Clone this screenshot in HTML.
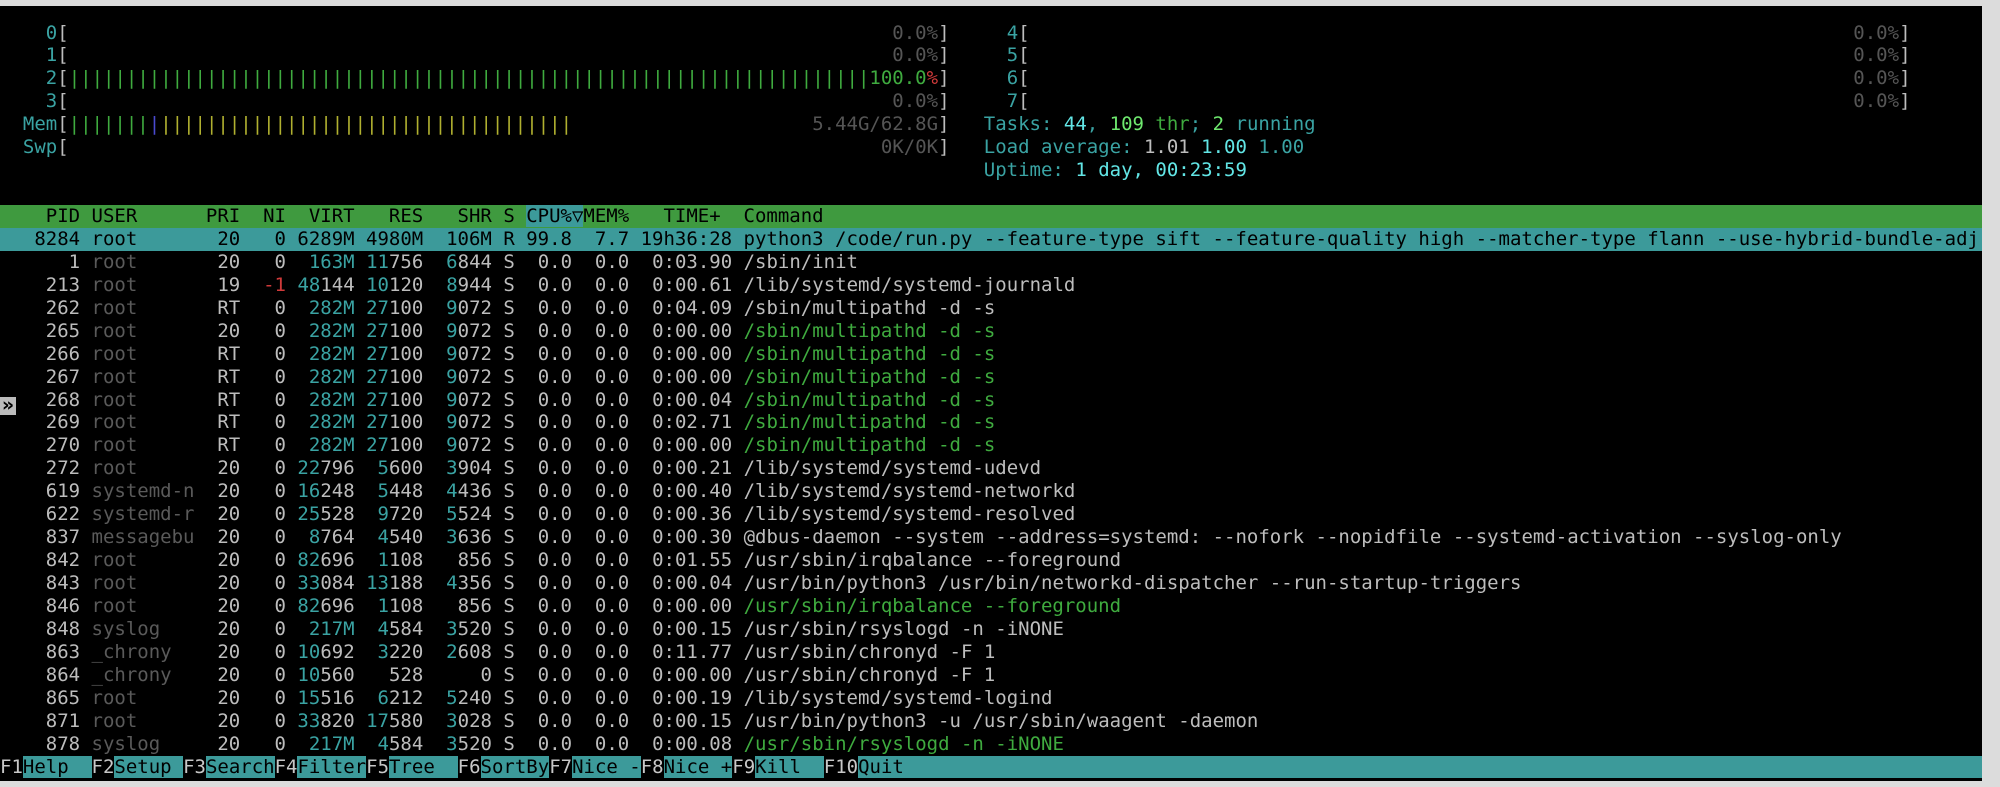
<!DOCTYPE html>
<html><head><meta charset="utf-8"><style>
html,body{margin:0;padding:0;background:#dcdcdc;width:2000px;height:787px;overflow:hidden}
#t{position:absolute;left:0;top:6px;width:1982px;height:775px;background:#000;overflow:hidden}
#s{position:absolute;left:0;top:15.5px;width:1982px}
.l{position:relative;height:22.95px;line-height:22.95px;white-space:pre;font-family:"DejaVu Sans Mono","Liberation Mono",monospace;font-size:19px;color:#bdbdbd;overflow:hidden}
.l i{font-style:normal;position:absolute;top:0}
.c{color:#3aa3a3}.d{color:#5a5a5a}.g{color:#3fab3f}.y{color:#b0b030}.b{color:#4a4ad0}.r{color:#d03a3a}
.C{color:#62e6e6}.G{color:#6ee86e}.dk{color:#555}
.hd{background:#3f9a3f;color:#000}.sel{background:#3c9a9a;color:#000}
.hc{background:#3c9a9a}
.ft{background:#000;color:#c8c8c8}.fk{background:#3c9a9a;color:#000}
#ar{position:absolute;left:0;top:391px;width:16px;height:18px;background:#bbb;color:#000;font:bold 19px "DejaVu Sans",sans-serif;line-height:17px;text-align:center}
</style></head><body><div id="t"><div id="s">
<div class="l"><i style="left:45.8px"><span class="c">0</span>[</i><i style="left:892.3px"><span class="dk">0.0%</span>]</i><i style="left:1006.7px"><span class="c">4</span>[</i><i style="left:1853.3px"><span class="dk">0.0%</span>]</i></div>
<div class="l"><i style="left:45.8px"><span class="c">1</span>[</i><i style="left:892.3px"><span class="dk">0.0%</span>]</i><i style="left:1006.7px"><span class="c">5</span>[</i><i style="left:1853.3px"><span class="dk">0.0%</span>]</i></div>
<div class="l"><i style="left:45.8px"><span class="c">2</span>[<span class="g">||||||||||||||||||||||||||||||||||||||||||||||||||||||||||||||||||||||100.0</span><span class="r">%</span>]</i><i style="left:1006.7px"><span class="c">6</span>[</i><i style="left:1853.3px"><span class="dk">0.0%</span>]</i></div>
<div class="l"><i style="left:45.8px"><span class="c">3</span>[</i><i style="left:892.3px"><span class="dk">0.0%</span>]</i><i style="left:1006.7px"><span class="c">7</span>[</i><i style="left:1853.3px"><span class="dk">0.0%</span>]</i></div>
<div class="l"><i style="left:22.9px"><span class="c">Mem</span>[<span class="g">|||||||</span><span class="b">|</span><span class="y">||||||||||||||||||||||||||||||||||||</span></i><i style="left:812.2px"><span class="dk">5.44G/62.8G</span>]</i><i style="left:983.8px"><span class="c">Tasks: </span><span class="C">44</span><span class="c">, </span><span class="G">109</span><span class="g"> thr</span><span class="c">; </span><span class="G">2</span><span class="c"> running</span></i></div>
<div class="l"><i style="left:22.9px"><span class="c">Swp</span>[</i><i style="left:880.9px"><span class="dk">0K/0K</span>]</i><i style="left:983.8px"><span class="c">Load average: </span>1.01 <span class="C">1.00</span> <span class="c">1.00</span></i></div>
<div class="l"><i style="left:983.8px"><span class="c">Uptime: </span><span class="C">1 day, 00:23:59</span></i></div>
<div class="l"> </div>
<div class="l hd">    PID USER      PRI  NI  VIRT   RES   SHR S <span class="hc">CPU%▽</span>MEM%   TIME+  Command</div>
<div class="l sel">   8284 root       20   0 6289M 4980M  106M R 99.8  7.7 19h36:28 python3 /code/run.py --feature-type sift --feature-quality high --matcher-type flann --use-hybrid-bundle-adj</div>
<div class="l">      1 <span class="d">root     </span>  20   0  <span class="c">163M</span> <span class="c">11</span>756  <span class="c">6</span>844 S  0.0  0.0  0:03.90 /sbin/init</div>
<div class="l">    213 <span class="d">root     </span>  19  <span class="r">-1</span> <span class="c">48</span>144 <span class="c">10</span>120  <span class="c">8</span>944 S  0.0  0.0  0:00.61 /lib/systemd/systemd-journald</div>
<div class="l">    262 <span class="d">root     </span>  RT   0  <span class="c">282M</span> <span class="c">27</span>100  <span class="c">9</span>072 S  0.0  0.0  0:04.09 /sbin/multipathd -d -s</div>
<div class="l">    265 <span class="d">root     </span>  20   0  <span class="c">282M</span> <span class="c">27</span>100  <span class="c">9</span>072 S  0.0  0.0  0:00.00 <span class="g">/sbin/multipathd -d -s</span></div>
<div class="l">    266 <span class="d">root     </span>  RT   0  <span class="c">282M</span> <span class="c">27</span>100  <span class="c">9</span>072 S  0.0  0.0  0:00.00 <span class="g">/sbin/multipathd -d -s</span></div>
<div class="l">    267 <span class="d">root     </span>  RT   0  <span class="c">282M</span> <span class="c">27</span>100  <span class="c">9</span>072 S  0.0  0.0  0:00.00 <span class="g">/sbin/multipathd -d -s</span></div>
<div class="l">    268 <span class="d">root     </span>  RT   0  <span class="c">282M</span> <span class="c">27</span>100  <span class="c">9</span>072 S  0.0  0.0  0:00.04 <span class="g">/sbin/multipathd -d -s</span></div>
<div class="l">    269 <span class="d">root     </span>  RT   0  <span class="c">282M</span> <span class="c">27</span>100  <span class="c">9</span>072 S  0.0  0.0  0:02.71 <span class="g">/sbin/multipathd -d -s</span></div>
<div class="l">    270 <span class="d">root     </span>  RT   0  <span class="c">282M</span> <span class="c">27</span>100  <span class="c">9</span>072 S  0.0  0.0  0:00.00 <span class="g">/sbin/multipathd -d -s</span></div>
<div class="l">    272 <span class="d">root     </span>  20   0 <span class="c">22</span>796  <span class="c">5</span>600  <span class="c">3</span>904 S  0.0  0.0  0:00.21 /lib/systemd/systemd-udevd</div>
<div class="l">    619 <span class="d">systemd-n</span>  20   0 <span class="c">16</span>248  <span class="c">5</span>448  <span class="c">4</span>436 S  0.0  0.0  0:00.40 /lib/systemd/systemd-networkd</div>
<div class="l">    622 <span class="d">systemd-r</span>  20   0 <span class="c">25</span>528  <span class="c">9</span>720  <span class="c">5</span>524 S  0.0  0.0  0:00.36 /lib/systemd/systemd-resolved</div>
<div class="l">    837 <span class="d">messagebu</span>  20   0  <span class="c">8</span>764  <span class="c">4</span>540  <span class="c">3</span>636 S  0.0  0.0  0:00.30 @dbus-daemon --system --address=systemd: --nofork --nopidfile --systemd-activation --syslog-only</div>
<div class="l">    842 <span class="d">root     </span>  20   0 <span class="c">82</span>696  <span class="c">1</span>108   856 S  0.0  0.0  0:01.55 /usr/sbin/irqbalance --foreground</div>
<div class="l">    843 <span class="d">root     </span>  20   0 <span class="c">33</span>084 <span class="c">13</span>188  <span class="c">4</span>356 S  0.0  0.0  0:00.04 /usr/bin/python3 /usr/bin/networkd-dispatcher --run-startup-triggers</div>
<div class="l">    846 <span class="d">root     </span>  20   0 <span class="c">82</span>696  <span class="c">1</span>108   856 S  0.0  0.0  0:00.00 <span class="g">/usr/sbin/irqbalance --foreground</span></div>
<div class="l">    848 <span class="d">syslog   </span>  20   0  <span class="c">217M</span>  <span class="c">4</span>584  <span class="c">3</span>520 S  0.0  0.0  0:00.15 /usr/sbin/rsyslogd -n -iNONE</div>
<div class="l">    863 <span class="d">_chrony  </span>  20   0 <span class="c">10</span>692  <span class="c">3</span>220  <span class="c">2</span>608 S  0.0  0.0  0:11.77 /usr/sbin/chronyd -F 1</div>
<div class="l">    864 <span class="d">_chrony  </span>  20   0 <span class="c">10</span>560   528     0 S  0.0  0.0  0:00.00 /usr/sbin/chronyd -F 1</div>
<div class="l">    865 <span class="d">root     </span>  20   0 <span class="c">15</span>516  <span class="c">6</span>212  <span class="c">5</span>240 S  0.0  0.0  0:00.19 /lib/systemd/systemd-logind</div>
<div class="l">    871 <span class="d">root     </span>  20   0 <span class="c">33</span>820 <span class="c">17</span>580  <span class="c">3</span>028 S  0.0  0.0  0:00.15 /usr/bin/python3 -u /usr/sbin/waagent -daemon</div>
<div class="l">    878 <span class="d">syslog   </span>  20   0  <span class="c">217M</span>  <span class="c">4</span>584  <span class="c">3</span>520 S  0.0  0.0  0:00.08 <span class="g">/usr/sbin/rsyslogd -n -iNONE</span></div>
<div class="l fk"><span class="ft">F1</span>Help  <span class="ft">F2</span>Setup <span class="ft">F3</span>Search<span class="ft">F4</span>Filter<span class="ft">F5</span>Tree  <span class="ft">F6</span>SortBy<span class="ft">F7</span>Nice -<span class="ft">F8</span>Nice +<span class="ft">F9</span>Kill  <span class="ft">F10</span>Quit</div>
</div><div id="ar">»</div></div></body></html>
